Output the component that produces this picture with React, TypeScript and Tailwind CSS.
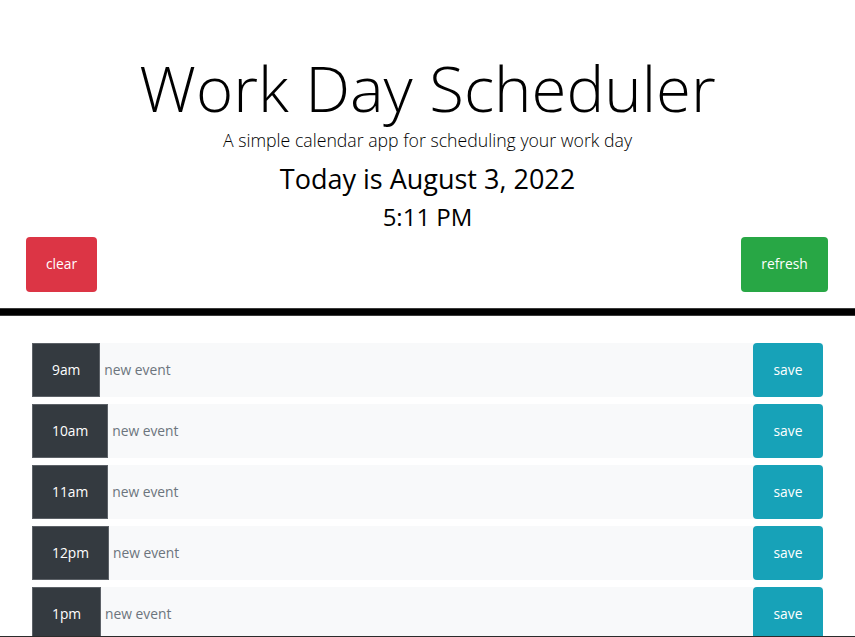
import React from "react";

const hours = ["9am", "10am", "11am", "12pm", "1pm", "2pm", "3pm", "4pm", "5pm"];

export default function App() {
  return (
    <div
      className="h-[637px] overflow-hidden border-b border-[#2b2b2b] bg-white text-black"
      style={{ fontFamily: '"Open Sans", "Noto Sans", sans-serif' }}
    >
      <header className="flex flex-col items-center pt-[52px] text-center">
        <h1 className="text-[63.5px] leading-[72px] font-light">Work Day Scheduler</h1>
        <p className="mt-[4px] text-[17.7px] leading-[24px] font-light">A simple calendar app for scheduling your work day</p>
        <p className="mt-[9px] text-[27px] leading-[36px]">Today is August 3, 2022</p>
        <p className="mt-[5px] text-[24px] leading-[30px]">5:11 PM</p>
      </header>
      <div className="mt-[5px] flex items-center justify-between pl-[26px] pr-[27px]">
        <button className="h-[55px] w-[71px] rounded-[4px] bg-[#dc3545] text-[13.8px] text-white">clear</button>
        <button className="h-[55px] w-[87px] rounded-[4px] bg-[#28a745] text-[13.8px] text-white">refresh</button>
      </div>
      <div className="mt-[16px] h-[8px] border-y border-[#3a3a3a] bg-black" />
      <main className="mt-[27px] flex flex-col gap-[7px] px-[32px]">
        {hours.map((h) => (
          <div key={h} className="flex h-[54px] items-stretch bg-[#f8f9fa]">
            <div className="flex items-center justify-center border border-[#5c6167] bg-[#343a40] px-[19px] text-[13.8px] text-white">
              {h}
            </div>
            <input
              className="min-w-0 flex-1 bg-transparent pl-[4px] text-[13.8px] text-[#6c757d] outline-none placeholder:text-[#6c757d]"
              placeholder="new event"
            />
            <button className="w-[70px] rounded-[4px] bg-[#17a2b8] text-[13.8px] text-white">save</button>
          </div>
        ))}
      </main>
    </div>
  );
}
